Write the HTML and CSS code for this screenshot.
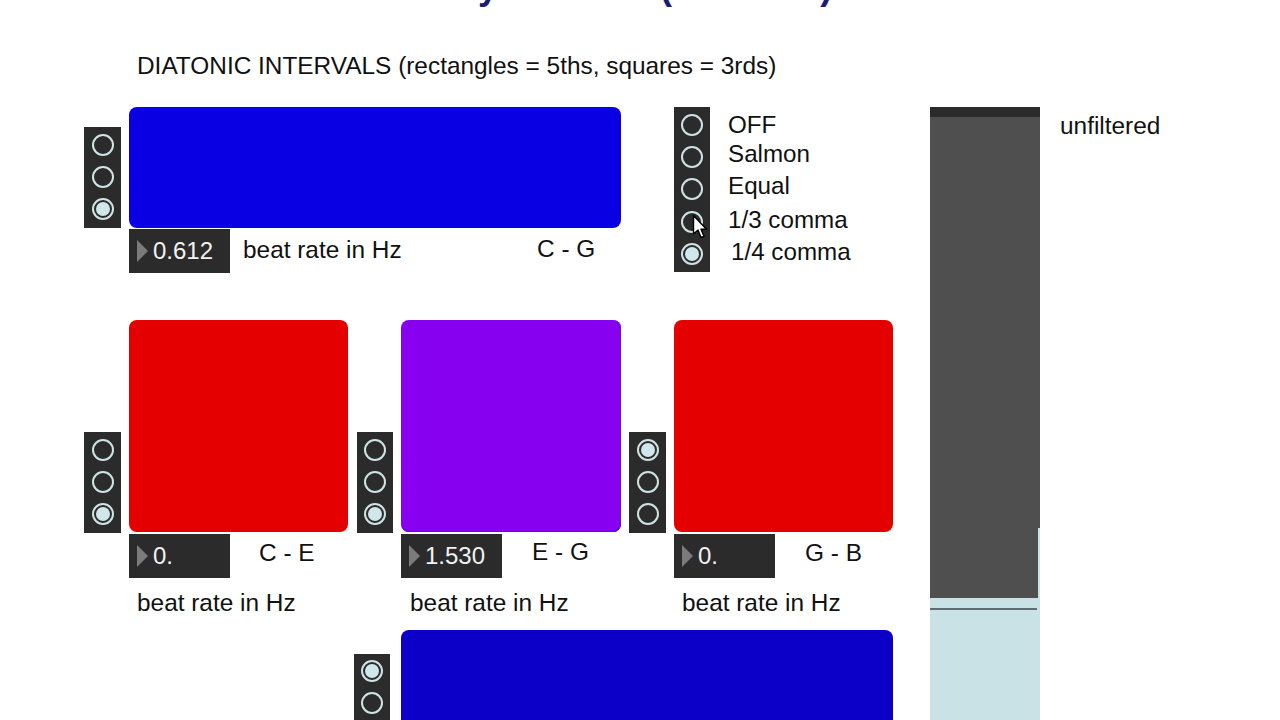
FILE: index.html
```html
<!DOCTYPE html>
<html>
<head>
<meta charset="utf-8">
<link rel="stylesheet" href="styles.css">
</head>
<body>
<div class="patcher">
  <div class="obj title">Harmony Seminar (Intervals)</div>
  <div class="obj label heading">DIATONIC INTERVALS (rectangles = 5ths, squares = 3rds)</div>

  <!-- fifth C-G -->
  <div class="obj radios rg-cg">
    <span class="radio"></span><span class="radio"></span><span class="radio on"></span>
  </div>
  <div class="obj swatch blue sw-cg"></div>
  <div class="obj numbox nb-cg">0.612</div>
  <div class="obj label lb-beat-cg">beat rate in Hz</div>
  <div class="obj label lb-cg">C - G</div>

  <!-- tuning selector -->
  <div class="obj radios tuning">
    <span class="radio"></span><span class="radio"></span><span class="radio"></span><span class="radio"></span><span class="radio on"></span>
  </div>
  <div class="obj tuning-labels">
    <div class="tl tl-off">OFF</div>
    <div class="tl tl-salmon">Salmon</div>
    <div class="tl tl-equal">Equal</div>
    <div class="tl tl-third">1/3 comma</div>
    <div class="tl tl-quarter">1/4 comma</div>
  </div>
  <svg class="obj cursor" width="16" height="26" viewBox="0 0 16 26">
    <path d="M1.5 1.5 L1.5 20 L6 16 L9 23.5 L12 22.3 L9 15.2 L14.5 15.2 Z" fill="#fff" stroke="#000" stroke-width="1.4" stroke-linejoin="round"/>
  </svg>

  <!-- meter -->
  <div class="obj meter">
    <div class="meter-cap"></div>
    <div class="meter-fill"></div>
    <div class="meter-rest"><div class="meter-line"></div></div>
  </div>
  <div class="obj label lb-unf">unfiltered</div>

  <!-- third C-E -->
  <div class="obj radios rg-ce">
    <span class="radio"></span><span class="radio"></span><span class="radio on"></span>
  </div>
  <div class="obj swatch red sw-ce"></div>
  <div class="obj numbox nb-ce">0.</div>
  <div class="obj label lb-ce">C - E</div>
  <div class="obj label lb-beat-ce">beat rate in Hz</div>

  <!-- third E-G -->
  <div class="obj radios rg-eg">
    <span class="radio"></span><span class="radio"></span><span class="radio on"></span>
  </div>
  <div class="obj swatch purple sw-eg"></div>
  <div class="obj numbox nb-eg">1.530</div>
  <div class="obj label lb-eg">E - G</div>
  <div class="obj label lb-beat-eg">beat rate in Hz</div>

  <!-- third G-B -->
  <div class="obj radios rg-gb">
    <span class="radio on"></span><span class="radio"></span><span class="radio"></span>
  </div>
  <div class="obj swatch red sw-gb"></div>
  <div class="obj numbox nb-gb">0.</div>
  <div class="obj label lb-gb">G - B</div>
  <div class="obj label lb-beat-gb">beat rate in Hz</div>

  <!-- fifth bottom -->
  <div class="obj radios rg-bot">
    <span class="radio on"></span><span class="radio"></span><span class="radio"></span>
  </div>
  <div class="obj swatch deepblue sw-bot"></div>
</div>
</body>
</html>
```
FILE: styles.css
```css
html, body {
  margin: 0;
  padding: 0;
  background: #ffffff;
  overflow: hidden;
}
.patcher {
  position: relative;
  width: 1280px;
  height: 720px;
  overflow: hidden;
  font-family: "Liberation Sans", Arial, sans-serif;
  color: #111111;
}
.obj { position: absolute; }

.title {
  left: 342px;
  top: -31px;
  font-size: 36px;
  line-height: 36px;
  font-weight: bold;
  color: #1b1b72;
  white-space: nowrap;
}

.label {
  font-size: 24.4px;
  line-height: 28px;
  white-space: nowrap;
}
.heading { left: 137px; top: 52px; font-size: 24.4px; }

/* radio groups */
.radios {
  background: #2b2b2b;
  width: 37px;
  box-sizing: border-box;
  padding: 7px 0 8px;
  display: flex;
  flex-direction: column;
  align-items: center;
  gap: 10px;
}
.radio {
  display: block;
  flex-shrink: 0;
  width: 22px;
  height: 22px;
  box-sizing: border-box;
  border: 2px solid #cfe3e6;
  border-radius: 50%;
  position: relative;
}
.radio.on::after {
  content: "";
  position: absolute;
  left: 2px;
  top: 2px;
  width: 14px;
  height: 14px;
  border-radius: 50%;
  background: #cfe6ea;
}
.rg-cg { left: 84px; top: 127px; }
.rg-ce { left: 84px; top: 432px; }
.rg-eg { left: 357px; top: 432px; width: 36px; }
.rg-gb { left: 629px; top: 432px; }
.rg-bot { left: 354px; top: 654px; width: 36px; padding-top: 6px; }

.tuning {
  left: 674px;
  top: 107px;
  width: 36px;
  height: 165px;
  padding: 7px 0;
  gap: 10.2px;
}
.tuning-labels {
  left: 728px;
  top: 110px;
  font-size: 24.2px;
  line-height: 30px;
}
.tl { white-space: nowrap; }
.tl-off { margin-bottom: -1px; }
.tl-salmon { margin-bottom: 2px; }
.tl-equal { margin-bottom: 4px; }
.tl-third { margin-bottom: 2px; }
.tl-quarter { margin-left: 3px; }
.cursor { left: 692px; top: 214px; }

/* swatches */
.swatch { border-radius: 8px; }
.blue { background: #0a00e4; }
.red { background: #e50000; }
.purple { background: #8800f0; box-shadow: inset 0 -1px 0 #3a1ae8, inset -1px 0 0 #5a10ea; }
.deepblue { background: #0c00c8; }
.sw-cg { left: 129px; top: 107px; width: 492px; height: 121px; }
.sw-ce { left: 129px; top: 320px; width: 219px; height: 212px; }
.sw-eg { left: 401px; top: 320px; width: 220px; height: 212px; }
.sw-gb { left: 674px; top: 320px; width: 219px; height: 212px; }
.sw-bot { left: 401px; top: 630px; width: 492px; height: 110px; }

/* number boxes */
.numbox {
  width: 101px;
  height: 44px;
  background: #2b2b2b;
  color: #f2f2f2;
  font-size: 24px;
  display: flex;
  align-items: center;
  box-sizing: border-box;
  padding-left: 8px;
}
.numbox::before {
  content: "";
  width: 0;
  height: 0;
  border-left: 11px solid #7b7b7b;
  border-top: 11px solid transparent;
  border-bottom: 11px solid transparent;
  margin-right: 5px;
}
.nb-cg { left: 129px; top: 229px; }
.nb-ce { left: 129px; top: 534px; }
.nb-eg { left: 401px; top: 534px; }
.nb-gb { left: 674px; top: 534px; }

.lb-beat-cg { left: 243px; top: 236px; }
.lb-cg { left: 537px; top: 235px; }
.lb-ce { left: 259px; top: 539px; }
.lb-eg { left: 532px; top: 538px; }
.lb-gb { left: 805px; top: 539px; }
.lb-beat-ce { left: 137px; top: 589px; }
.lb-beat-eg { left: 410px; top: 589px; }
.lb-beat-gb { left: 682px; top: 589px; }
.lb-unf { left: 1060px; top: 112px; }

/* meter */
.meter {
  left: 930px;
  top: 107px;
  width: 110px;
  height: 613px;
  display: flex;
  flex-direction: column;
  background: #c8e2e5;
}
.meter-cap { height: 10px; background: #2b2b2b; }
.meter-fill {
  height: 481px;
  background: #4f4f4f;
  position: relative;
}
.meter-fill::after {
  content: "";
  position: absolute;
  right: 0;
  bottom: 0;
  width: 2px;
  height: 70px;
  background: #c8e2e5;
}
.meter-rest { flex: 1; padding-top: 10px; }
.meter-line { height: 2px; width: 107px; background: #5d6d71; }
```
